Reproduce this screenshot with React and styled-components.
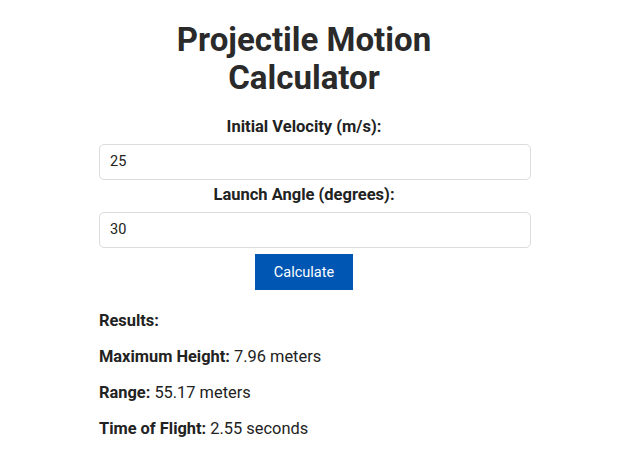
import React, { useState } from 'react'
import styled, { createGlobalStyle } from 'styled-components'

const GlobalStyle = createGlobalStyle`
  body {
    margin: 0;
    background: #ffffff;
    font-family: Roboto, "Liberation Sans", Arial, sans-serif;
    color: #222;
  }
`

const Page = styled.div`
  padding: 0 131px 0 99px;
`

const Container = styled.div`
  width: 410px;
`

const Title = styled.h1`
  font-size: 33px;
  font-weight: 700;
  text-align: center;
  color: #2a2a2a;
  margin: 21px 0 21px;
  line-height: 37.5px;
`

const Label = styled.label`
  display: block;
  text-align: center;
  font-size: 16.5px;
  font-weight: 700;
  line-height: 19px;
  margin: ${props => (props.first ? '0' : '5px')} 0 8px;
`

const Input = styled.input`
  display: block;
  width: 100%;
  padding: 9px 10px;
  font-family: Roboto, "Liberation Sans", Arial, sans-serif;
  font-size: 14.5px;
  line-height: 16px;
  color: #222;
  border: 1px solid #dcdcdc;
  border-radius: 5px;
  outline: none;
  margin: 0;
`

const ButtonRow = styled.div`
  display: flex;
  justify-content: center;
  margin-top: 6px;
`

const Button = styled.button`
  width: 98px;
  height: 36px;
  background: #0056b3;
  color: #fff;
  border: none;
  border-radius: 0;
  font-family: Roboto, "Liberation Sans", Arial, sans-serif;
  font-size: 14.5px;
  cursor: pointer;
`

const Results = styled.div`
  margin-top: 21px;
`

const Line = styled.p`
  margin: 0 0 16px;
  font-size: 16.4px;
  line-height: 20px;
  color: #222;
`

export default function App() {
  const [velocity, setVelocity] = useState('25')
  const [angle, setAngle] = useState('30')
  const [res, setRes] = useState({ h: '7.96', r: '55.17', t: '2.55' })

  const calc = () => {
    const v = parseFloat(velocity)
    const a = (parseFloat(angle) * Math.PI) / 180
    const g = 9.81
    setRes({
      h: ((v * v * Math.sin(a) ** 2) / (2 * g)).toFixed(2),
      r: ((v * v * Math.sin(2 * a)) / g).toFixed(2),
      t: ((2 * v * Math.sin(a)) / g).toFixed(2),
    })
  }

  return (
    <>
      <GlobalStyle />
      <Page>
        <Container>
          <Title>Projectile Motion<br />Calculator</Title>
          <Label first htmlFor="v">Initial Velocity (m/s):</Label>
          <Input id="v" value={velocity} onChange={e => setVelocity(e.target.value)} />
          <Label htmlFor="a">Launch Angle (degrees):</Label>
          <Input id="a" value={angle} onChange={e => setAngle(e.target.value)} />
          <ButtonRow>
            <Button onClick={calc}>Calculate</Button>
          </ButtonRow>
          <Results>
            <Line><strong>Results:</strong></Line>
            <Line><strong>Maximum Height:</strong> {res.h} meters</Line>
            <Line><strong>Range:</strong> {res.r} meters</Line>
            <Line><strong>Time of Flight:</strong> {res.t} seconds</Line>
          </Results>
        </Container>
      </Page>
    </>
  )
}
